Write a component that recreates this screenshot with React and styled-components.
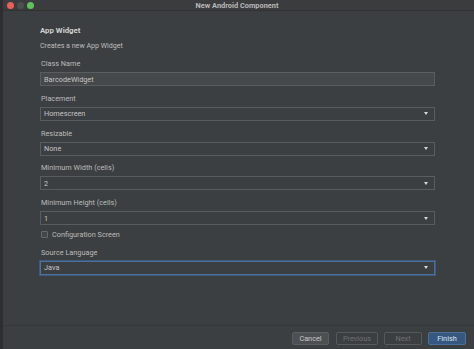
import React from 'react';
import styled, { createGlobalStyle } from 'styled-components';

const Global = createGlobalStyle`
  html, body {
    margin: 0;
    padding: 0;
    background: #3c3f41;
  }
  * { box-sizing: border-box; }
`;

const Window = styled.div`
  width: 474px;
  height: 349px;
  display: flex;
  flex-direction: column;
  background: #3c3f41;
  font-family: Roboto, "Liberation Sans", sans-serif;
  color: #bbbbbb;
  border-left: 3px solid #2c2e30;
  overflow: hidden;
`;

const TitleBar = styled.div`
  position: relative;
  height: 11px;
  flex: none;
  display: flex;
  align-items: center;
  justify-content: center;
  background: #3a3c3e;
  border-bottom: 1px solid #303234;
  margin-left: -3px;
`;

const Lights = styled.div`
  position: absolute;
  left: 7px;
  top: 2px;
  display: flex;
  gap: 3px;
`;

const Light = styled.span`
  width: 7px;
  height: 7px;
  border-radius: 50%;
  background: ${p => p.color};
`;

const Title = styled.div`
  font-size: 7.4px;
  font-weight: 700;
  color: #b9b9b9;
  line-height: 10px;
  padding-top: 1px;
`;

const Body = styled.div`
  flex: 1;
  padding: 14px 39px 0 37px;
  display: flex;
  flex-direction: column;
`;

const Heading = styled.div`
  font-size: 7.8px;
  font-weight: 700;
  color: #d0d0d0;
  line-height: 12px;
`;

const Sub = styled.div`
  font-size: 7.1px;
  line-height: 12px;
  margin-top: 3px;
  color: #bdbdbd;
`;

const Form = styled.div`
  margin-top: 6px;
  display: flex;
  flex-direction: column;
  gap: 6.75px;
`;

const Field = styled.div`
  display: flex;
  flex-direction: column;
  gap: 2px;
`;

const Label = styled.div`
  font-size: 7.3px;
  line-height: 12px;
  padding-left: 1px;
`;

const Box = styled.div`
  height: 14px;
  display: flex;
  align-items: center;
  justify-content: space-between;
  padding: 0 6px 0 3px;
  font-size: 7.3px;
  color: #c4c4c4;
  background: ${p => (p.input ? '#45494a' : '#3c3f41')};
  border: 1px solid ${p => (p.focus ? '#4a709c' : '#5a5d60')};
  box-shadow: ${p => (p.focus ? '0 0 0 1px #3d5a7c' : 'none')};
`;

const Arrow = styled.span`
  width: 0;
  height: 0;
  border-left: 2.5px solid transparent;
  border-right: 2.5px solid transparent;
  border-top: 3px solid #d8d8d8;
`;

const CheckRow = styled.label`
  display: flex;
  align-items: center;
  gap: 4px;
  height: 10px;
  margin-top: -2px;
  font-size: 7.3px;
  padding-left: 1px;
`;

const CheckBox = styled.span`
  width: 7px;
  height: 7px;
  border: 1px solid #676a6d;
  border-radius: 1px;
  background: #43474a;
`;

const Footer = styled.div`
  flex: none;
  height: 24px;
  border-top: 1px solid #35383a;
  display: flex;
  align-items: center;
  justify-content: flex-end;
  gap: 6px;
  padding: 1px 8px 0 0;
  margin-left: -3px;
`;

const Button = styled.div`
  width: ${p => p.w}px;
  height: 13px;
  display: flex;
  align-items: center;
  justify-content: center;
  font-size: 7.3px;
  border-radius: 2px;
  background: ${p => (p.primary ? '#365880' : p.disabled ? 'transparent' : '#4c5052')};
  border: 1px solid ${p => (p.primary ? '#4c709a' : p.disabled ? '#55585a' : '#5a5e60')};
  color: ${p => (p.primary ? '#dfe6ee' : p.disabled ? '#6e7173' : '#c8c8c8')};
`;

const SelectField = ({ label, value, input, focus }) => (
  <Field>
    <Label>{label}</Label>
    <Box input={input} focus={focus}>
      <span>{value}</span>
      {!input && <Arrow />}
    </Box>
  </Field>
);

export default function App() {
  return (
    <Window>
      <Global />
      <TitleBar>
        <Lights>
          <Light color="#ec5f57" />
          <Light color="#4d4f51" />
          <Light color="#5ec455" />
        </Lights>
        <Title>New Android Component</Title>
      </TitleBar>
      <Body>
        <Heading>App Widget</Heading>
        <Sub>Creates a new App Widget</Sub>
        <Form>
          <SelectField label="Class Name" value="BarcodeWidget" input />
          <SelectField label="Placement" value="Homescreen" />
          <SelectField label="Resizable" value="None" />
          <SelectField label="Minimum Width (cells)" value="2" />
          <SelectField label="Minimum Height (cells)" value="1" />
          <CheckRow>
            <CheckBox />
            Configuration Screen
          </CheckRow>
          <SelectField label="Source Language" value="Java" focus />
        </Form>
      </Body>
      <Footer>
        <Button w={37} style={{ marginRight: 1 }}>Cancel</Button>
        <Button w={42} disabled>Previous</Button>
        <Button w={38} disabled>Next</Button>
        <Button w={38} primary>Finish</Button>
      </Footer>
    </Window>
  );
}
